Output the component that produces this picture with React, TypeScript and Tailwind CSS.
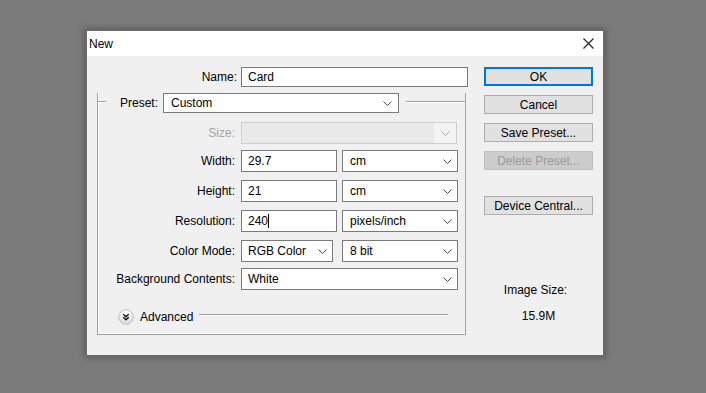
import React from "react";

const font = { fontFamily: '"Liberation Sans", Arial, sans-serif' };

function Chevron({ color = "#4d4d4d" }: { color?: string }) {
    return (
        <svg width="9" height="5" viewBox="0 0 9 5" className="shrink-0">
            <path d="M0.5 0.5 L4.5 4.5 L8.5 0.5" fill="none" stroke={color} strokeWidth="1" />
        </svg>
    );
}

function Select({ value, w }: { value: string; w: string }) {
    return (
        <div className={`${w} h-[22px] flex items-center justify-between bg-white border border-[#7a7a7a] pl-[7px] pr-[5px]`}>
            <span>{value}</span>
            <Chevron />
        </div>
    );
}

function Input({ value, w, caret }: { value: string; w: string; caret?: boolean }) {
    return (
        <div className={`${w} h-[22px] flex items-center bg-white border border-[#7a7a7a] pl-[6px]`}>
            <span>{value}</span>
            {caret && <span className="w-px h-[14px] bg-black" />}
        </div>
    );
}

function Btn({ label, primary, disabled, className = "" }: { label: string; primary?: boolean; disabled?: boolean; className?: string }) {
    let cls = "bg-[#e1e1e1] border border-[#adadad] text-black";
    if (primary) cls = "bg-[#e1e1e1] border-2 border-[#0078d7] text-black";
    if (disabled) cls = "bg-[#cccccc] border border-[#bfbfbf] text-[#9a9a9a]";
    return (
        <div className={`h-[19px] w-[109px] flex items-center justify-center text-[12px] ${cls} ${className}`}>
            {label}
        </div>
    );
}

function Row({ label, children, dim, className = "" }: { label: string; children: React.ReactNode; dim?: boolean; className?: string }) {
    return (
        <div className={`flex items-center h-[22px] ${className}`}>
            <div className={`w-[138px] text-right pr-px ${dim ? "text-[#a3a3a3]" : "text-black"}`}>{label}</div>
            <div className="ml-[5px] flex items-center gap-[5px]">{children}</div>
        </div>
    );
}

export default function App() {
    return (
        <div className="w-[706px] h-[393px] bg-[#7b7b7b] pt-[30px] pl-[86px] text-[12px] text-black" style={font}>
            <div className="w-[518px] h-[326px] bg-[#f0f0f0] border border-[#6a6a6a] shadow-[0_0_6px_2px_rgba(0,0,0,0.25)] flex flex-col">
                {/* title bar */}
                <div className="h-[25px] bg-white flex items-center justify-between pl-[2px] pr-[9px] shrink-0">
                    <span className="text-[12px]">New</span>
                    <svg width="11" height="11" viewBox="0 0 11 11">
                        <path d="M0.5 0.5 L10.5 10.5 M10.5 0.5 L0.5 10.5" stroke="#222" strokeWidth="1.1" />
                    </svg>
                </div>

                <div className="flex pl-[10px] pt-[11px]">
                    {/* left column */}
                    <div className="w-[371px]">
                        <div className="flex items-center justify-end h-[20px]">
                            <span className="mr-[4px]">Name:</span>
                            <div className="w-[227px] h-[20px] flex items-center bg-white border border-[#7a7a7a] pl-[6px]">Card</div>
                        </div>

                        <div className="mt-[14px] w-[369px] h-[242px] border-l border-r border-b border-[#a0a0a0] shadow-[inset_1px_0_0_#ffffff,inset_0_-1px_0_#ffffff]">
                            {/* header: Preset */}
                            <div className="flex h-[20px] -mt-[8px]">
                                <div className="w-[8px] mt-[8px] h-0 border-t border-[#a0a0a0] border-b border-b-white" />
                                <div className="ml-[14px] flex items-center">
                                    <span>Preset:</span>
                                    <div className="ml-[5px]">
                                        <div className="w-[236px] h-[20px] flex items-center justify-between bg-white border border-[#7a7a7a] pl-[7px] pr-[6px]">
                                            <span>Custom</span>
                                            <Chevron />
                                        </div>
                                    </div>
                                </div>
                                <div className="ml-[7px] flex-1 mt-[8px] h-0 border-t border-[#a0a0a0] border-b border-b-white" />
                            </div>

                            <Row label="Size:" dim className="mt-[9px]">
                                <div className="w-[216px] h-[22px] flex items-center justify-end bg-[#e9e9e9] border border-[#cfcfcf]">
                                    <div className="h-full w-[22px] bg-[#f3f3f3] flex items-center justify-center">
                                        <Chevron color="#a8a8a8" />
                                    </div>
                                </div>
                            </Row>
                            <Row label="Width:" className="mt-[6px]">
                                <Input value="29.7" w="w-[96px]" />
                                <Select value="cm" w="w-[116px]" />
                            </Row>
                            <Row label="Height:" className="mt-[8px]">
                                <Input value="21" w="w-[96px]" />
                                <Select value="cm" w="w-[116px]" />
                            </Row>
                            <Row label="Resolution:" className="mt-[8px]">
                                <Input value="240" w="w-[96px]" caret />
                                <Select value="pixels/inch" w="w-[116px]" />
                            </Row>
                            <Row label="Color Mode:" className="mt-[8px]">
                                <div className="w-[92px] h-[22px] flex items-center justify-between bg-white border border-[#7a7a7a] pl-[6px] pr-[5px]">
                                    <span>RGB Color</span>
                                    <Chevron />
                                </div>
                                <div className="ml-[4px]">
                                    <Select value="8 bit" w="w-[116px]" />
                                </div>
                            </Row>
                            <Row label="Background Contents:" className="mt-[6px]">
                                <div className="w-[217px] h-[22px] flex items-center justify-between bg-white border border-[#7a7a7a] pl-[6px] pr-[5px]">
                                    <span>White</span>
                                    <Chevron />
                                </div>
                            </Row>

                            <div className="mt-[18px] ml-[20px] flex items-center h-[17px]">
                                <svg width="16" height="16" viewBox="0 0 16 16">
                                    <defs>
                                        <linearGradient id="adv" x1="0" y1="0" x2="0" y2="1">
                                            <stop offset="0" stopColor="#ffffff" />
                                            <stop offset="1" stopColor="#dcdcdc" />
                                        </linearGradient>
                                    </defs>
                                    <circle cx="8" cy="8" r="7.2" fill="url(#adv)" stroke="#b5b5b5" strokeWidth="0.9" />
                                    <path d="M5.3 5.3 L8 7.8 L10.7 5.3 M5.3 8.3 L8 10.8 L10.7 8.3" fill="none" stroke="#111" strokeWidth="1.4" />
                                </svg>
                                <span className="ml-[6px]">Advanced</span>
                                <div className="ml-[6px] w-[249px] h-0 border-t border-[#a0a0a0] border-b border-b-white -mt-[3px]" />
                            </div>
                        </div>
                    </div>

                    {/* right column */}
                    <div className="ml-[16px] flex flex-col items-center">
                        <Btn label="OK" primary />
                        <Btn label="Cancel" className="mt-[9px]" />
                        <Btn label="Save Preset..." className="mt-[9px]" />
                        <Btn label="Delete Preset..." disabled className="mt-[9px]" />
                        <Btn label="Device Central..." className="mt-[26px]" />
                        <div className="mt-[66px] pr-[6px]">Image Size:</div>
                        <div className="mt-[8px]">15.9M</div>
                    </div>
                </div>
            </div>
        </div>
    );
}
